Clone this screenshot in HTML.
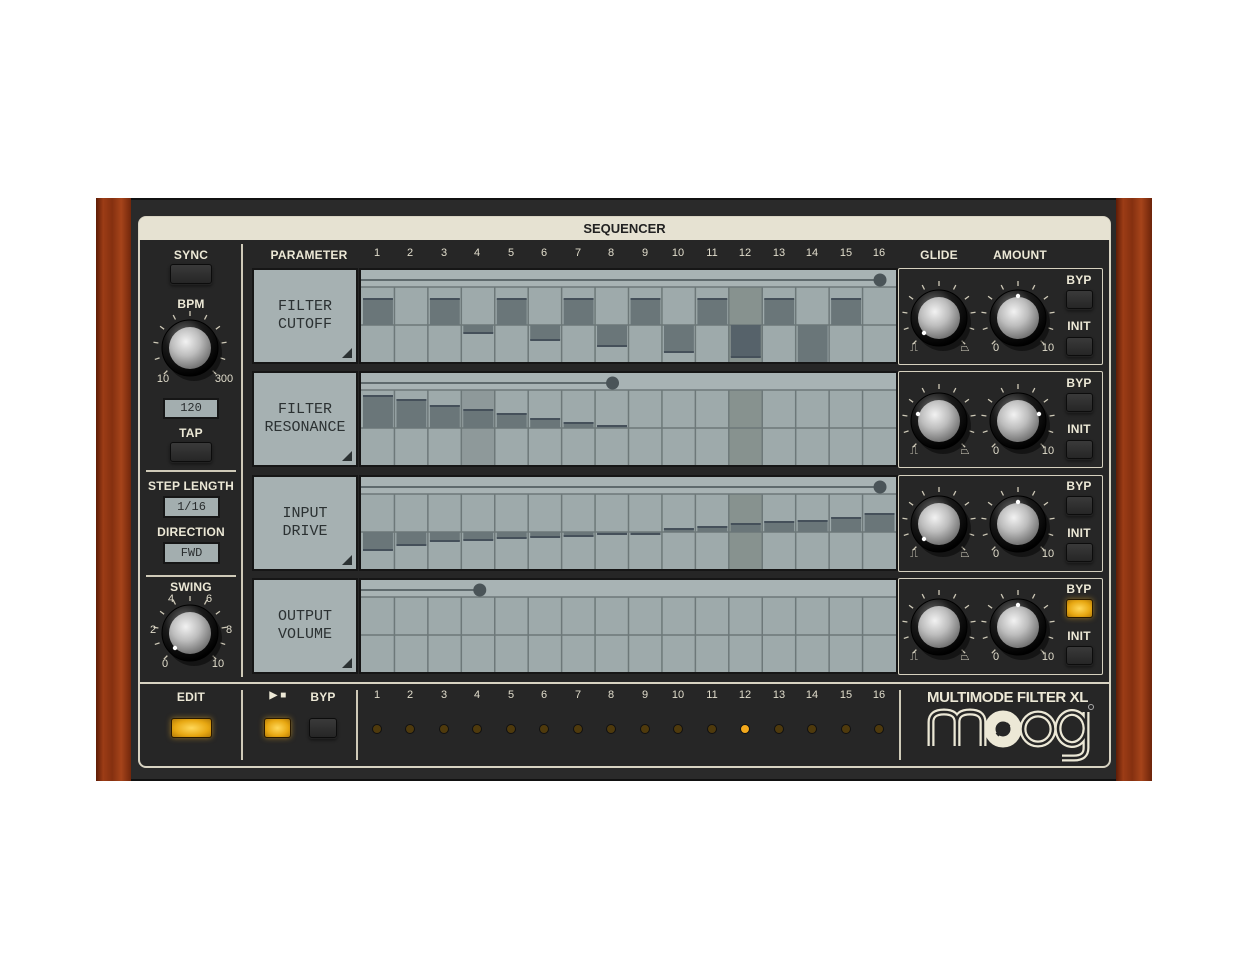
<!DOCTYPE html>
<html><head><meta charset="utf-8"><style>
*{margin:0;padding:0;box-sizing:border-box}
body{width:1248px;height:980px;background:#fff;position:relative;overflow:hidden;font-family:"Liberation Sans",sans-serif}
.a{position:absolute}
.wood{background:linear-gradient(90deg,#5e1c06,#9c3c16 20%,#853010 45%,#a6441a 70%,#6c240a);}
.lbl{position:absolute;color:#ece8d6;font-weight:bold;font-size:12px;text-align:center;letter-spacing:0.2px}
.num{position:absolute;color:#e0dccb;font-size:11px;width:20px;text-align:center}
.btn{position:absolute;background:linear-gradient(#3a3a3a,#262626);border:1px solid #0c0c0c;border-radius:3px;box-shadow:0 1px 1px rgba(255,255,255,.08),0 2px 3px rgba(0,0,0,.6)}
.amb{position:absolute;background:radial-gradient(ellipse at center,#ffd85a,#e8a812 60%,#b27a08);border:1px solid #2a1a00;border-radius:3px;box-shadow:0 0 6px rgba(255,190,40,.5)}
.lcd{position:absolute;background:#a3aeaf;border:2px solid #161616;font-family:"Liberation Mono",monospace;color:#2a2e2f;text-align:center}
.lab{position:absolute;left:252px;width:106px;height:96px;background:#a6b1b2;border:2px solid #161616;font-family:"Liberation Mono",monospace;font-size:15px;color:#2b3132;text-align:center;line-height:18px;padding-top:28px}
.lab:after{content:"";position:absolute;right:4px;bottom:4px;border-left:10px solid transparent;border-bottom:10px solid #2b3132}
.grid{position:absolute;left:359px;width:539px;height:96px;border:2px solid #161616;background:#9eaaab}
.kb{position:absolute;left:898px;width:205px;height:97px;border:1.5px solid #d6d1bf;border-radius:2px}
.led{position:absolute;width:10px;height:10px;border-radius:50%;background:#4f3a0c;border:1px solid #111;top:724px}
.knob{position:absolute;width:80px;height:80px}
</style></head><body>
<svg width="0" height="0" style="position:absolute">
<defs>
<radialGradient id="sil" cx="40%" cy="35%" r="75%"><stop offset="0" stop-color="#f2f2f2"/><stop offset=".45" stop-color="#bdbdbd"/><stop offset="1" stop-color="#5e5e5e"/></radialGradient>
<radialGradient id="blk" cx="40%" cy="30%" r="70%"><stop offset="0" stop-color="#707070"/><stop offset=".5" stop-color="#1a1a1a"/><stop offset="1" stop-color="#000"/></radialGradient>
<g id="knob">
<g stroke="#cfcab8" stroke-width="1.3">
<line x1="40" y1="3" x2="40" y2="8"/><line x1="40" y1="3" x2="40" y2="8" transform="rotate(27 40 40)"/><line x1="40" y1="3" x2="40" y2="8" transform="rotate(54 40 40)"/><line x1="40" y1="3" x2="40" y2="8" transform="rotate(81 40 40)"/><line x1="40" y1="3" x2="40" y2="8" transform="rotate(108 40 40)"/><line x1="40" y1="3" x2="40" y2="8" transform="rotate(135 40 40)"/><line x1="40" y1="3" x2="40" y2="8" transform="rotate(-27 40 40)"/><line x1="40" y1="3" x2="40" y2="8" transform="rotate(-54 40 40)"/><line x1="40" y1="3" x2="40" y2="8" transform="rotate(-81 40 40)"/><line x1="40" y1="3" x2="40" y2="8" transform="rotate(-108 40 40)"/><line x1="40" y1="3" x2="40" y2="8" transform="rotate(-135 40 40)"/>
</g>
<circle cx="44" cy="45" r="28" fill="rgba(0,0,0,.45)"/>
<circle cx="40" cy="40" r="28" fill="url(#blk)" stroke="#000"/>
<circle cx="40" cy="40" r="21" fill="url(#sil)"/>
</g>
<g id="gridbase">
<rect x="0" y="0" width="536" height="17" fill="#a8b3b4"/>
<line x1="0" y1="17" x2="536" y2="17" stroke="#6d7879" stroke-width="1.5"/>
<line x1="0" y1="55" x2="536" y2="55" stroke="#6d7879" stroke-width="1.5"/>
<g stroke="#6d7879" stroke-width="1.5">
<line x1="33.5" y1="17" x2="33.5" y2="94"/><line x1="67" y1="17" x2="67" y2="94"/><line x1="100.5" y1="17" x2="100.5" y2="94"/><line x1="134" y1="17" x2="134" y2="94"/><line x1="167.5" y1="17" x2="167.5" y2="94"/><line x1="201" y1="17" x2="201" y2="94"/><line x1="234.5" y1="17" x2="234.5" y2="94"/><line x1="268" y1="17" x2="268" y2="94"/><line x1="301.5" y1="17" x2="301.5" y2="94"/><line x1="335" y1="17" x2="335" y2="94"/><line x1="368.5" y1="17" x2="368.5" y2="94"/><line x1="402" y1="17" x2="402" y2="94"/><line x1="435.5" y1="17" x2="435.5" y2="94"/><line x1="469" y1="17" x2="469" y2="94"/><line x1="502.5" y1="17" x2="502.5" y2="94"/>
</g>
</g>
</defs></svg>

<div class="a wood" style="left:96px;top:198px;width:36px;height:583px"></div>
<div class="a wood" style="left:1116px;top:198px;width:36px;height:583px"></div>
<div class="a" style="left:131px;top:198px;width:985px;height:583px;background:#2a2a2a;border-top:2px solid #111;border-bottom:2px solid #111"></div>
<div class="a" style="left:138px;top:216px;width:973px;height:552px;border:2px solid #d8d3c2;border-radius:8px;background:#262626"></div>
<div class="a" style="left:139px;top:217px;width:971px;height:23px;background:#e6e2d2;border-radius:7px 7px 0 0;text-align:center;font-weight:bold;font-size:13px;line-height:24px;color:#222">SEQUENCER</div>

<!-- left column -->
<div class="a" style="left:241px;top:244px;width:2px;height:433px;background:#cfcab8"></div>
<div class="lbl" style="left:150px;top:248px;width:82px">SYNC</div>
<div class="btn" style="left:170px;top:264px;width:42px;height:20px"></div>
<div class="lbl" style="left:150px;top:297px;width:82px">BPM</div>
<svg class="knob" style="left:150px;top:308px"><use href="#knob"/></svg>
<div class="num" style="left:153px;top:373px">10</div><div class="num" style="left:214px;top:373px;width:20px">300</div>
<div class="lcd" style="left:163px;top:398px;width:56px;height:21px;font-size:12px;line-height:17px">120</div>
<div class="lbl" style="left:150px;top:426px;width:82px">TAP</div>
<div class="btn" style="left:170px;top:442px;width:42px;height:20px"></div>
<div class="a" style="left:146px;top:470px;width:90px;height:2px;background:#cfcab8"></div>
<div class="lbl" style="left:146px;top:479px;width:90px">STEP LENGTH</div>
<div class="lcd" style="left:163px;top:496px;width:57px;height:22px;font-size:12px;line-height:18px">1/16</div>
<div class="lbl" style="left:146px;top:525px;width:90px">DIRECTION</div>
<div class="lcd" style="left:163px;top:542px;width:57px;height:22px;font-size:12px;line-height:18px">FWD</div>
<div class="a" style="left:146px;top:575px;width:90px;height:2px;background:#cfcab8"></div>
<div class="lbl" style="left:146px;top:580px;width:90px">SWING</div>
<svg class="knob" style="left:150px;top:593px"><use href="#knob"/><circle cx="25" cy="55" r="2.2" fill="#fff"/></svg>
<div class="num" style="left:163px;top:593px;width:16px">4</div><div class="num" style="left:201px;top:593px;width:16px">6</div>
<div class="num" style="left:145px;top:624px;width:16px">2</div><div class="num" style="left:221px;top:624px;width:16px">8</div>
<div class="num" style="left:157px;top:658px;width:16px">0</div><div class="num" style="left:208px;top:658px;width:20px">10</div>

<!-- headers -->
<div class="lbl" style="left:268px;top:248px;width:82px">PARAMETER</div>
<div class="num" style="left:367px;top:247px">1</div><div class="num" style="left:400px;top:247px">2</div><div class="num" style="left:434px;top:247px">3</div><div class="num" style="left:467px;top:247px">4</div><div class="num" style="left:501px;top:247px">5</div><div class="num" style="left:534px;top:247px">6</div><div class="num" style="left:568px;top:247px">7</div><div class="num" style="left:601px;top:247px">8</div><div class="num" style="left:635px;top:247px">9</div><div class="num" style="left:668px;top:247px">10</div><div class="num" style="left:702px;top:247px">11</div><div class="num" style="left:735px;top:247px">12</div><div class="num" style="left:769px;top:247px">13</div><div class="num" style="left:802px;top:247px">14</div><div class="num" style="left:836px;top:247px">15</div><div class="num" style="left:869px;top:247px">16</div>
<div class="lbl" style="left:910px;top:248px;width:58px">GLIDE</div>
<div class="lbl" style="left:985px;top:248px;width:70px">AMOUNT</div>

<!-- rows -->
<div class="lab" style="top:268px">FILTER<br>CUTOFF</div>
<div class="lab" style="top:371px">FILTER<br>RESONANCE</div>
<div class="lab" style="top:475px">INPUT<br>DRIVE</div>
<div class="lab" style="top:578px">OUTPUT<br>VOLUME</div>

<svg class="grid" style="top:268px" viewBox="0 0 536 92" preserveAspectRatio="none">
<rect x="368.5" y="17" width="33.5" height="77" fill="#87928f"/>
<use href="#gridbase"/>
<g fill="#6a7679"><rect x="2" y="29" width="30" height="26"/><rect x="69" y="29" width="30" height="26"/><rect x="136" y="29" width="30" height="26"/><rect x="203" y="29" width="30" height="26"/><rect x="270" y="29" width="30" height="26"/><rect x="337" y="29" width="30" height="26"/><rect x="404" y="29" width="30" height="26"/><rect x="471" y="29" width="30" height="26"/>
<rect x="102.5" y="55" width="30" height="8"/><rect x="169.5" y="55" width="30" height="15"/><rect x="236.5" y="55" width="30" height="21"/><rect x="303.5" y="55" width="30" height="27"/><rect x="370.5" y="55" width="30" height="32" fill="#56626a"/><rect x="437.5" y="55" width="30" height="37"/></g>
<g fill="#45505a"><rect x="2" y="28" width="30" height="2"/><rect x="69" y="28" width="30" height="2"/><rect x="136" y="28" width="30" height="2"/><rect x="203" y="28" width="30" height="2"/><rect x="270" y="28" width="30" height="2"/><rect x="337" y="28" width="30" height="2"/><rect x="404" y="28" width="30" height="2"/><rect x="471" y="28" width="30" height="2"/><rect x="102.5" y="62" width="30" height="2"/><rect x="169.5" y="69" width="30" height="2"/><rect x="236.5" y="75" width="30" height="2"/><rect x="303.5" y="81" width="30" height="2"/><rect x="370.5" y="86" width="30" height="2"/></g>
<line x1="0" y1="10" x2="520" y2="10" stroke="#5f6a6d" stroke-width="2"/><circle cx="520" cy="10" r="6.5" fill="#4a5458"/>
</svg>

<svg class="grid" style="top:371px" viewBox="0 0 536 92" preserveAspectRatio="none">
<rect x="368.5" y="17" width="33.5" height="77" fill="#87928f"/><rect x="100.5" y="17" width="33.5" height="77" fill="#8e999a"/>
<use href="#gridbase"/>
<g fill="#6a7679"><rect x="2" y="22" width="30" height="33"/><rect x="35.5" y="26" width="30" height="29"/><rect x="69" y="32" width="30" height="23"/><rect x="102.5" y="36" width="30" height="19"/><rect x="136" y="40" width="30" height="15"/><rect x="169.5" y="45" width="30" height="10"/><rect x="203" y="49" width="30" height="6"/><rect x="236.5" y="52" width="30" height="3"/></g>
<g fill="#45505a"><rect x="2" y="22" width="30" height="2"/><rect x="35.5" y="26" width="30" height="2"/><rect x="69" y="32" width="30" height="2"/><rect x="102.5" y="36" width="30" height="2"/><rect x="136" y="40" width="30" height="2"/><rect x="169.5" y="45" width="30" height="2"/><rect x="203" y="49" width="30" height="2"/><rect x="236.5" y="52" width="30" height="2"/></g>
<line x1="0" y1="10" x2="252" y2="10" stroke="#5f6a6d" stroke-width="2"/><circle cx="252" cy="10" r="6.5" fill="#4a5458"/>
</svg>

<svg class="grid" style="top:475px" viewBox="0 0 536 92" preserveAspectRatio="none">
<rect x="368.5" y="17" width="33.5" height="77" fill="#87928f"/>
<use href="#gridbase"/>
<g fill="#6a7679"><rect x="2" y="55" width="30" height="18"/><rect x="35.5" y="55" width="30" height="13"/><rect x="69" y="55" width="30" height="9"/><rect x="102.5" y="55" width="30" height="8"/><rect x="136" y="55" width="30" height="6"/><rect x="169.5" y="55" width="30" height="5"/><rect x="203" y="55" width="30" height="4"/><rect x="236.5" y="55" width="30" height="2"/><rect x="270" y="55" width="30" height="1"/><rect x="303.5" y="51" width="30" height="4"/><rect x="337" y="49" width="30" height="6"/><rect x="370.5" y="46" width="30" height="9"/><rect x="404" y="44" width="30" height="11"/><rect x="437.5" y="43" width="30" height="12"/><rect x="471" y="40" width="30" height="15"/><rect x="504.5" y="36" width="30" height="19"/></g>
<g fill="#45505a"><rect x="2" y="72" width="30" height="2"/><rect x="35.5" y="67" width="30" height="2"/><rect x="69" y="63" width="30" height="2"/><rect x="102.5" y="62" width="30" height="2"/><rect x="136" y="60" width="30" height="2"/><rect x="169.5" y="59" width="30" height="2"/><rect x="203" y="58" width="30" height="2"/><rect x="236.5" y="56" width="30" height="2"/><rect x="270" y="56" width="30" height="2"/><rect x="303.5" y="51" width="30" height="2"/><rect x="337" y="49" width="30" height="2"/><rect x="370.5" y="46" width="30" height="2"/><rect x="404" y="44" width="30" height="2"/><rect x="437.5" y="43" width="30" height="2"/><rect x="471" y="40" width="30" height="2"/><rect x="504.5" y="36" width="30" height="2"/></g>
<line x1="0" y1="10" x2="520" y2="10" stroke="#5f6a6d" stroke-width="2"/><circle cx="520" cy="10" r="6.5" fill="#4a5458"/>
</svg>

<svg class="grid" style="top:578px" viewBox="0 0 536 92" preserveAspectRatio="none">
<use href="#gridbase"/>
<line x1="0" y1="10" x2="119" y2="10" stroke="#5f6a6d" stroke-width="2"/><circle cx="119" cy="10" r="6.5" fill="#4a5458"/>
</svg>

<!-- knob boxes -->
<div class="kb" style="top:268px"></div><div class="kb" style="top:371px"></div><div class="kb" style="top:475px"></div><div class="kb" style="top:578px"></div>

<div class="lbl" style="left:1062px;top:273px;width:34px">BYP</div><div class="btn" style="left:1066px;top:290px;width:27px;height:19px"></div>
<div class="lbl" style="left:1062px;top:319px;width:34px">INIT</div><div class="btn" style="left:1066px;top:337px;width:27px;height:19px"></div>
<div class="lbl" style="left:1062px;top:376px;width:34px">BYP</div><div class="btn" style="left:1066px;top:393px;width:27px;height:19px"></div>
<div class="lbl" style="left:1062px;top:422px;width:34px">INIT</div><div class="btn" style="left:1066px;top:440px;width:27px;height:19px"></div>
<div class="lbl" style="left:1062px;top:479px;width:34px">BYP</div><div class="btn" style="left:1066px;top:496px;width:27px;height:19px"></div>
<div class="lbl" style="left:1062px;top:526px;width:34px">INIT</div><div class="btn" style="left:1066px;top:543px;width:27px;height:19px"></div>
<div class="lbl" style="left:1062px;top:582px;width:34px">BYP</div><div class="amb" style="left:1066px;top:599px;width:27px;height:19px"></div>
<div class="lbl" style="left:1062px;top:629px;width:34px">INIT</div><div class="btn" style="left:1066px;top:646px;width:27px;height:19px"></div>

<svg class="knob" style="left:899px;top:278px"><use href="#knob"/><circle cx="25" cy="55" r="2.2" fill="#fff"/></svg>
<svg class="knob" style="left:978px;top:278px"><use href="#knob"/><circle cx="40" cy="18" r="2.2" fill="#fff"/></svg>
<svg class="knob" style="left:899px;top:381px"><use href="#knob"/><circle cx="19" cy="33" r="2.2" fill="#fff"/></svg>
<svg class="knob" style="left:978px;top:381px"><use href="#knob"/><circle cx="61" cy="33" r="2.2" fill="#fff"/></svg>
<svg class="knob" style="left:899px;top:484px"><use href="#knob"/><circle cx="25" cy="55" r="2.2" fill="#fff"/></svg>
<svg class="knob" style="left:978px;top:484px"><use href="#knob"/><circle cx="40" cy="18" r="2.2" fill="#fff"/></svg>
<svg class="knob" style="left:899px;top:587px"><use href="#knob"/></svg>
<svg class="knob" style="left:978px;top:587px"><use href="#knob"/><circle cx="40" cy="18" r="2.2" fill="#fff"/></svg>

<div class="num" style="left:904px;top:342px">⎍</div><div class="num" style="left:955px;top:342px">⏢</div><div class="num" style="left:986px;top:342px">0</div><div class="num" style="left:1038px;top:342px">10</div>
<div class="num" style="left:904px;top:445px">⎍</div><div class="num" style="left:955px;top:445px">⏢</div><div class="num" style="left:986px;top:445px">0</div><div class="num" style="left:1038px;top:445px">10</div>
<div class="num" style="left:904px;top:548px">⎍</div><div class="num" style="left:955px;top:548px">⏢</div><div class="num" style="left:986px;top:548px">0</div><div class="num" style="left:1038px;top:548px">10</div>
<div class="num" style="left:904px;top:651px">⎍</div><div class="num" style="left:955px;top:651px">⏢</div><div class="num" style="left:986px;top:651px">0</div><div class="num" style="left:1038px;top:651px">10</div>

<!-- bottom -->
<div class="a" style="left:139px;top:682px;width:971px;height:2px;background:#d8d3c2"></div>
<div class="a" style="left:241px;top:690px;width:2px;height:70px;background:#cfcab8"></div>
<div class="a" style="left:356px;top:690px;width:2px;height:70px;background:#cfcab8"></div>
<div class="a" style="left:899px;top:690px;width:2px;height:70px;background:#cfcab8"></div>
<div class="lbl" style="left:160px;top:690px;width:62px">EDIT</div>
<div class="amb" style="left:171px;top:718px;width:41px;height:20px"></div>
<div class="lbl" style="left:258px;top:690px;width:40px;font-size:10px">▶ ■</div>
<div class="amb" style="left:264px;top:718px;width:27px;height:20px"></div>
<div class="lbl" style="left:305px;top:690px;width:36px">BYP</div>
<div class="btn" style="left:309px;top:718px;width:28px;height:20px"></div>
<div class="num" style="left:367px;top:689px">1</div><div class="num" style="left:400px;top:689px">2</div><div class="num" style="left:434px;top:689px">3</div><div class="num" style="left:467px;top:689px">4</div><div class="num" style="left:501px;top:689px">5</div><div class="num" style="left:534px;top:689px">6</div><div class="num" style="left:568px;top:689px">7</div><div class="num" style="left:601px;top:689px">8</div><div class="num" style="left:635px;top:689px">9</div><div class="num" style="left:668px;top:689px">10</div><div class="num" style="left:702px;top:689px">11</div><div class="num" style="left:735px;top:689px">12</div><div class="num" style="left:769px;top:689px">13</div><div class="num" style="left:802px;top:689px">14</div><div class="num" style="left:836px;top:689px">15</div><div class="num" style="left:869px;top:689px">16</div>
<div class="led" style="left:372px"></div><div class="led" style="left:405px"></div><div class="led" style="left:439px"></div><div class="led" style="left:472px"></div><div class="led" style="left:506px"></div><div class="led" style="left:539px"></div><div class="led" style="left:573px"></div><div class="led" style="left:606px"></div><div class="led" style="left:640px"></div><div class="led" style="left:673px"></div><div class="led" style="left:707px"></div><div class="led" style="left:740px;background:#f3a91c"></div><div class="led" style="left:774px"></div><div class="led" style="left:807px"></div><div class="led" style="left:841px"></div><div class="led" style="left:874px"></div>

<div class="a" style="left:927px;top:689px;font-weight:bold;font-size:15px;color:#ece8d6;letter-spacing:-0.4px">MULTIMODE FILTER XL</div>
<svg class="a" style="left:926px;top:704px" width="170" height="58" viewBox="0 0 170 58">
<g fill="none" stroke-linecap="butt">
<path d="M5 42V18q0-10 13-10t13 10v24M31 18q0-10 13-10t13 10v24" stroke="#ece8d6" stroke-width="7"/>
<path d="M5 42V18q0-10 13-10t13 10v24M31 18q0-10 13-10t13 10v24" stroke="#262626" stroke-width="2.5"/>
<circle cx="112" cy="25" r="15" stroke="#ece8d6" stroke-width="7"/><circle cx="112" cy="25" r="15" stroke="#262626" stroke-width="2.5"/>
<path d="M160 25a14 16 0 1 1 0-1M160 8v36q0 10-12 10h-12" stroke="#ece8d6" stroke-width="7"/>
<path d="M160 25a14 16 0 1 1 0-1M160 8v36q0 10-12 10h-12" stroke="#262626" stroke-width="2.5"/>
<circle cx="77" cy="25" r="13" stroke="#ece8d6" stroke-width="11"/>
</g>
<path d="M71 31l12-11" stroke="#262626" stroke-width="4"/>
<circle cx="165" cy="3" r="2.5" fill="none" stroke="#aaa" stroke-width="1"/>
</svg>
</body></html>
